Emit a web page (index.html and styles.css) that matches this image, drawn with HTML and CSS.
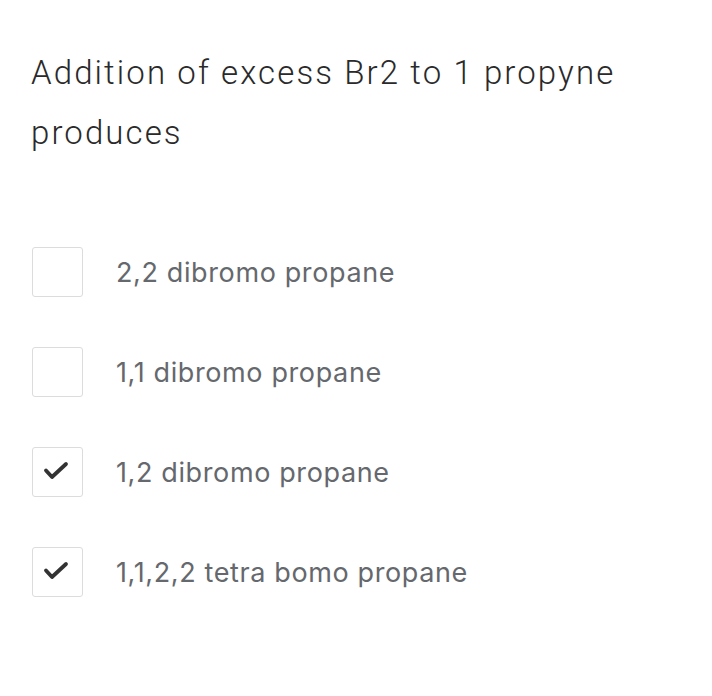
FILE: index.html
```html
<!DOCTYPE html>
<html lang="en">
<head>
<meta charset="utf-8">
<title>Question</title>
<link rel="stylesheet" href="styles.css">
</head>
<body>
<main class="question">
  <h1 class="title">Addition of excess Br2 to 1 propyne produces</h1>
  <ul class="options">
    <li class="option">
      <span class="box"></span>
      <span class="label">2,2 dibromo propane</span>
    </li>
    <li class="option">
      <span class="box"></span>
      <span class="label">1,1 dibromo propane</span>
    </li>
    <li class="option">
      <span class="box checked"><svg class="tick" viewBox="1.5 1.5 48 47" width="48" height="47"><path d="M14.5 24 L20.5 30.5 L34.5 17.5" fill="none" stroke="#333" stroke-width="3.8" stroke-linecap="round" stroke-linejoin="round"/></svg></span>
      <span class="label">1,2 dibromo propane</span>
    </li>
    <li class="option">
      <span class="box checked"><svg class="tick" viewBox="1.5 1.5 48 47" width="48" height="47"><path d="M14.5 24 L20.5 30.5 L34.5 17.5" fill="none" stroke="#333" stroke-width="3.8" stroke-linecap="round" stroke-linejoin="round"/></svg></span>
      <span class="label">1,1,2,2 tetra bomo propane</span>
    </li>
  </ul>
</main>
</body>
</html>
```
FILE: styles.css
```css
html, body {
  margin: 0;
  padding: 0;
  background: #ffffff;
}
.question {
  padding: 43px 32px 0 31px;
}
.title {
  margin: 0;
  font-family: Roboto, "Liberation Sans", sans-serif;
  font-weight: 300;
  font-size: 33px;
  letter-spacing: 2.1px;
  line-height: 60px;
  color: #2a2a2a;
  max-width: 640px;
}
.options {
  list-style: none;
  margin: 84px 0 0 0;
  padding: 0;
  display: flex;
  flex-direction: column;
  gap: 50px;
}
.option {
  display: flex;
  align-items: center;
  gap: 33px;
  height: 50px;
}
.box {
  box-sizing: border-box;
  width: 51px;
  height: 50px;
  border: 1.5px solid #dcdcdc;
  border-radius: 3px;
  flex: none;
  margin-left: 1px;
}
.tick {
  display: block;
}
.label {
  font-family: Inter, Roboto, "Liberation Sans", sans-serif;
  font-size: 27px;
  letter-spacing: 0.62px;
  color: #65686d;
}
```
